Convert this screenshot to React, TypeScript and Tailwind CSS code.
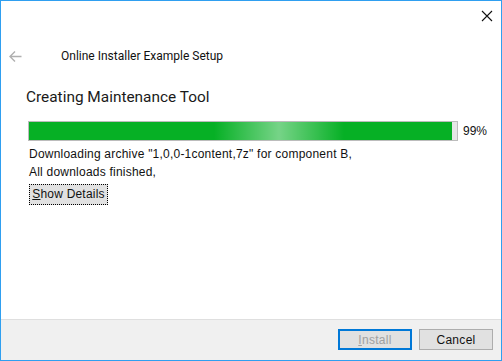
import React from "react";

export default function App() {
  return (
    <div className="w-[502px] h-[361px] flex flex-col border border-[#2f9ff0] bg-white overflow-hidden" style={{ fontFamily: 'Roboto, sans-serif' }}>
      <div className="flex-1 flex flex-col relative">
        <div className="flex justify-end pt-[9px] pr-[8px]">
          <svg width="12" height="12" viewBox="0 0 12 12" className="block">
            <path d="M1 1 L11 11 M11 1 L1 11" stroke="#111" strokeWidth="1.1" />
          </svg>
        </div>
        <div className="flex items-center mt-[27px] h-[14px]">
          <svg width="13" height="11" viewBox="0 0 13 11" className="ml-[8px] block">
            <path d="M6 0.5 L1 5.5 L6 10.5 M1 5.5 L12.5 5.5" stroke="#b0b0b0" strokeWidth="1.4" fill="none" />
          </svg>
          <span className="ml-[39px] text-[12px] leading-[14px] text-[#111]" style={{ fontFamily: 'Roboto, sans-serif' }}>Online Installer Example Setup</span>
        </div>
        <div className="pl-[25px] mt-[24px]">
          <div className="text-[15.4px] leading-[20px] text-[#1a1a1a]" style={{ fontFamily: 'Roboto, sans-serif' }}>Creating Maintenance Tool</div>
        </div>
        <div className="flex items-center pl-[27px] mt-[14px]">
          <div className="relative w-[430px] h-[20px] border border-[#bcbcbc] bg-[#e6e6e6] overflow-hidden">
            <div className="h-full w-[423px] bg-[#06b025] relative">
              <div className="absolute top-0 bottom-0 left-[185px] w-[130px] bg-[linear-gradient(to_right,rgba(255,255,255,0),rgba(255,255,255,0.45),rgba(255,255,255,0))]" />
            </div>
          </div>
          <span className="ml-[5px] text-[12px] leading-[14px] text-[#111]" style={{ fontFamily: '"Liberation Sans", sans-serif' }}>99%</span>
        </div>
        <div className="pl-[28px] mt-[4px] text-[12px] leading-[18px] tracking-[0.22px] text-[#111]" style={{ fontFamily: '"Liberation Sans", sans-serif' }}>
          <div>Downloading archive "1,0,0-1content,7z" for component B,</div>
          <div>All downloads finished,</div>
        </div>
        <div className="pl-[28px] mt-[0px]">
          <button className="h-[21px] w-[79px] border border-dotted border-black bg-[#e1e1e1] text-[12px] leading-[14px] tracking-[0.2px] text-[#111] px-[2px]" style={{ fontFamily: '"Liberation Sans", sans-serif' }}>
            <span className="underline">S</span>how Details
          </button>
        </div>
      </div>
      <div className="h-[41px] border-t border-[#dfdfdf] bg-[#f0f0f0] flex items-start justify-end pt-[9px] pr-[8px] gap-[7px]">
        <button className="h-[21px] w-[74px] border-2 border-[#0078d7] bg-[#e1e1e1] text-[12px] leading-[14px] tracking-[0.3px] text-[#a0a0a0]" style={{ fontFamily: '"Liberation Sans", sans-serif' }}>
          <span className="underline">I</span>nstall
        </button>
        <button className="h-[21px] w-[74px] border border-[#adadad] bg-[#e1e1e1] text-[12px] leading-[14px] tracking-[0.3px] text-[#111]" style={{ fontFamily: '"Liberation Sans", sans-serif' }}>
          Cancel
        </button>
      </div>
    </div>
  );
}
